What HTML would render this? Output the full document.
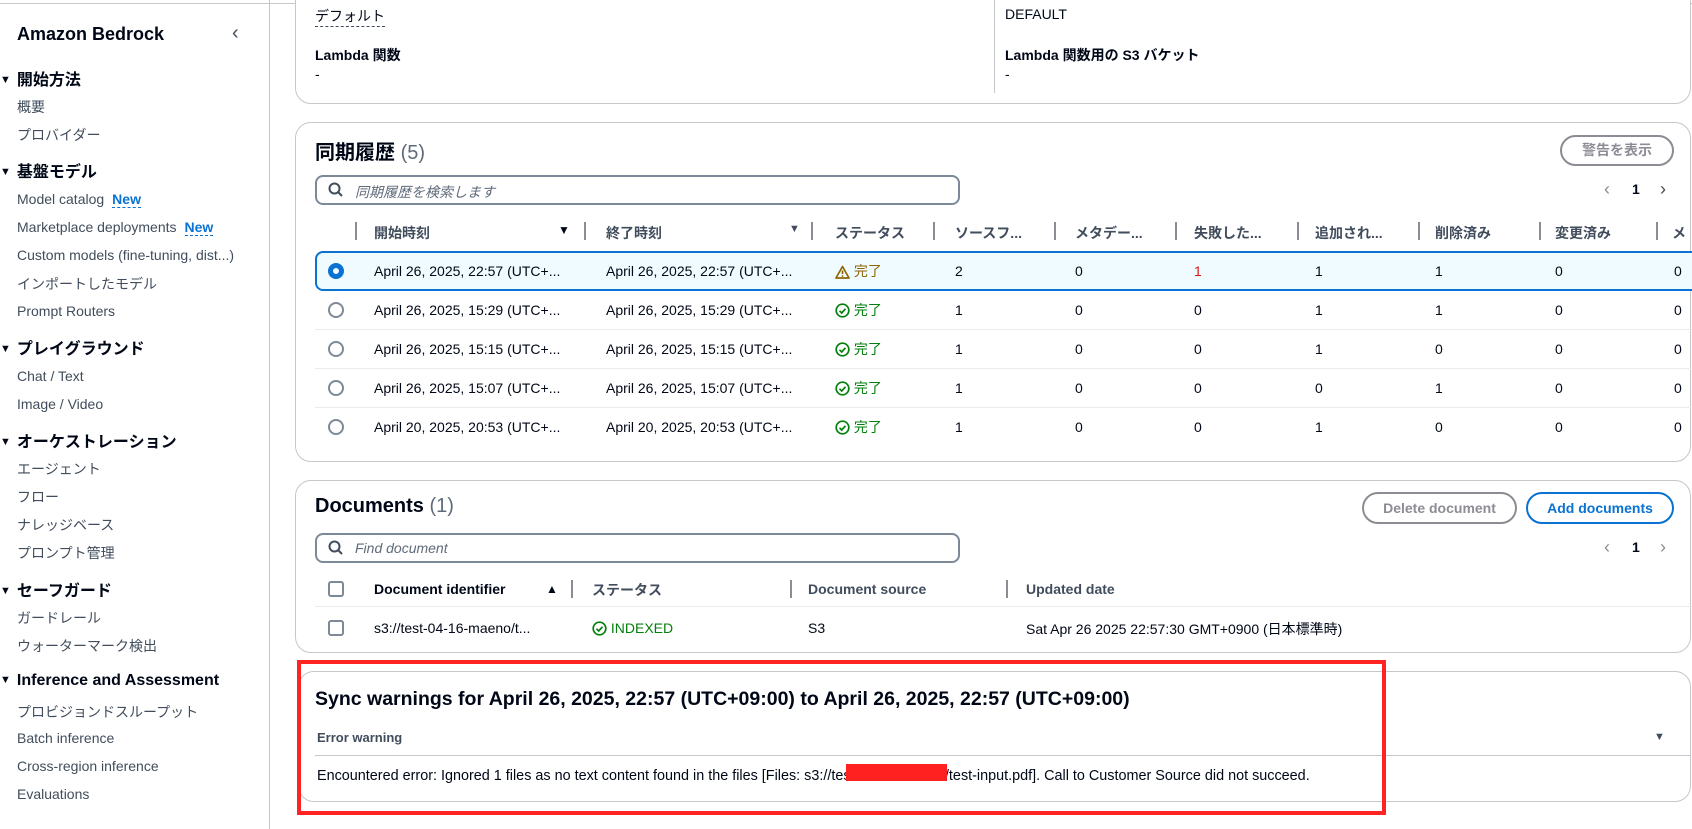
<!DOCTYPE html>
<html><head><meta charset="utf-8"><style>
*{box-sizing:border-box;margin:0;padding:0}
body{width:1692px;height:829px;overflow:hidden;background:#fff;font-family:"Liberation Sans","Noto Sans CJK JP",sans-serif;color:#000716;font-size:14px;position:relative}
.a{position:absolute;white-space:nowrap}
.nav{left:17px;font-size:14px;color:#414d5c}
.sec{left:0;font-size:16px;font-weight:bold;color:#000716}
.sec:before{content:"▼";font-size:11px;margin-right:6px;position:relative;top:-2px}
.new{color:#0972d3;font-weight:bold;border-bottom:1px dashed #0972d3;margin-left:8px}
.panel{position:absolute;border:1px solid #c6c6cd;border-radius:16px;background:#fff}
.h{font-size:14px;font-weight:bold;color:#414d5c}
.div{position:absolute;width:2px;height:18px;background:#8c8c94}
.row{position:absolute;left:315px;width:1377px;height:1px;background:#e9ebed}
.btn{position:absolute;border:2px solid #8c8c94;border-radius:20px;color:#8c8c94;font-weight:bold;font-size:14px;text-align:center}
.search{position:absolute;border:2px solid #7d8998;border-radius:8px;color:#5f6b7a;font-style:italic;font-size:14px}
.radio{position:absolute;width:16px;height:16px;border:2px solid #7d8998;border-radius:50%}
.g{color:#037f0c}
.st svg{vertical-align:-3px}
</style></head><body>
<div class="a" style="left:0;top:3px;width:1692px;height:1px;background:#c6c6cd"></div>
<div class="a" style="left:269px;top:0;width:1px;height:829px;background:#c6c6cd"></div>
<div class="a" style="left:17px;top:24px;font-size:18px;font-weight:bold">Amazon Bedrock</div>
<div class="a" style="left:232px;top:22px;font-size:20px;color:#414d5c">‹</div>
<div class="a sec" style="top:66px">開始方法</div>
<div class="a nav" style="top:97px">概要</div>
<div class="a nav" style="top:125px">プロバイダー</div>
<div class="a sec" style="top:158px">基盤モデル</div>
<div class="a nav" style="top:191px">Model catalog<span class="new">New</span></div>
<div class="a nav" style="top:219px">Marketplace deployments<span class="new">New</span></div>
<div class="a nav" style="top:247px">Custom models (fine-tuning, dist...)</div>
<div class="a nav" style="top:274px">インポートしたモデル</div>
<div class="a nav" style="top:303px">Prompt Routers</div>
<div class="a sec" style="top:335px">プレイグラウンド</div>
<div class="a nav" style="top:368px">Chat / Text</div>
<div class="a nav" style="top:396px">Image / Video</div>
<div class="a sec" style="top:428px">オーケストレーション</div>
<div class="a nav" style="top:459px">エージェント</div>
<div class="a nav" style="top:487px">フロー</div>
<div class="a nav" style="top:515px">ナレッジベース</div>
<div class="a nav" style="top:543px">プロンプト管理</div>
<div class="a sec" style="top:577px">セーフガード</div>
<div class="a nav" style="top:608px">ガードレール</div>
<div class="a nav" style="top:636px">ウォーターマーク検出</div>
<div class="a sec" style="top:672px">Inference and Assessment</div>
<div class="a nav" style="top:702px">プロビジョンドスループット</div>
<div class="a nav" style="top:730px">Batch inference</div>
<div class="a nav" style="top:758px">Cross-region inference</div>
<div class="a nav" style="top:786px">Evaluations</div>

<div class="panel" style="left:295px;top:-30px;width:1396px;height:134px"></div>
<div class="a" style="left:315px;top:6px;border-bottom:1px dashed #414d5c">デフォルト</div>
<div class="a" style="left:1005px;top:6px">DEFAULT</div>
<div class="a" style="left:994px;top:0;width:1px;height:93px;background:#c6c6cd"></div>
<div class="a" style="left:315px;top:45px;font-weight:bold">Lambda 関数</div>
<div class="a" style="left:315px;top:66px">-</div>
<div class="a" style="left:1005px;top:45px;font-weight:bold">Lambda 関数用の S3 バケット</div>
<div class="a" style="left:1005px;top:66px">-</div>

<div class="panel" style="left:295px;top:122px;width:1396px;height:340px"></div>
<div class="a" style="left:315px;top:136px;font-size:20px;font-weight:bold">同期履歴 <span style="font-weight:normal;color:#5f6b7a">(5)</span></div>
<div class="btn" style="left:1560px;top:135px;width:114px;height:31px;line-height:27px">警告を表示</div>
<div class="search" style="left:315px;top:175px;width:645px;height:30px;padding:5px 0 0 38px">同期履歴を検索します</div>
<svg class="a" style="left:328px;top:182px" width="16" height="16"><circle cx="6.5" cy="6.5" r="5" fill="none" stroke="#414d5c" stroke-width="2"/><line x1="10" y1="10" x2="14" y2="14" stroke="#414d5c" stroke-width="2"/></svg>
<div class="a" style="left:1604px;top:179px;color:#8c8c94;font-size:18px">‹</div>
<div class="a" style="left:1632px;top:181px;font-weight:bold">1</div>
<div class="a" style="left:1660px;top:179px;color:#414d5c;font-size:18px">›</div>
<div class="div" style="left:355px;top:222px"></div><div class="div" style="left:584px;top:222px"></div><div class="div" style="left:811px;top:222px"></div><div class="div" style="left:933px;top:222px"></div><div class="div" style="left:1054px;top:222px"></div><div class="div" style="left:1175px;top:222px"></div><div class="div" style="left:1297px;top:222px"></div><div class="div" style="left:1418px;top:222px"></div><div class="div" style="left:1539px;top:222px"></div><div class="div" style="left:1656px;top:222px"></div>
<div class="a h" style="left:374px;top:223px">開始時刻</div><div class="a" style="left:558px;top:223px;font-size:12px">▼</div>
<div class="a h" style="left:606px;top:223px">終了時刻</div><div class="a" style="left:789px;top:223px;font-size:11px;color:#414d5c">▼</div>
<div class="a h" style="left:835px;top:223px">ステータス</div>
<div class="a h" style="left:955px;top:223px">ソースフ...</div>
<div class="a h" style="left:1075px;top:223px">メタデー...</div>
<div class="a h" style="left:1194px;top:223px">失敗した...</div>
<div class="a h" style="left:1315px;top:223px">追加され...</div>
<div class="a h" style="left:1435px;top:223px">削除済み</div>
<div class="a h" style="left:1555px;top:223px">変更済み</div>
<div class="a h" style="left:1672px;top:223px">メ</div>
<div class="a" style="left:315px;top:251px;width:1390px;height:40px;background:#f0fbff;border:2px solid #0972d3;border-radius:8px"></div>
<div class="row" style="top:329px"></div><div class="row" style="top:368px"></div><div class="row" style="top:407px"></div>
<div class="radio" style="left:328px;top:263px;border:5px solid #0972d3"></div>
<div class="radio" style="left:328px;top:302px"></div><div class="radio" style="left:328px;top:341px"></div><div class="radio" style="left:328px;top:380px"></div><div class="radio" style="left:328px;top:419px"></div>

<div class="a" style="left:374px;top:263px">April 26, 2025, 22:57 (UTC+...</div><div class="a" style="left:606px;top:263px">April 26, 2025, 22:57 (UTC+...</div>
<div class="a st" style="left:835px;top:261px;color:#8d6605"><svg width="15" height="14"><path d="M7.5 1.5L14 13H1z" fill="none" stroke="#8d6605" stroke-width="1.7" stroke-linejoin="round"/><line x1="7.5" y1="5.5" x2="7.5" y2="9" stroke="#8d6605" stroke-width="1.7"/><circle cx="7.5" cy="11" r="0.9" fill="#8d6605"/></svg> 完了</div>
<div class="a" style="left:955px;top:263px">2</div><div class="a" style="left:1075px;top:263px">0</div><div class="a" style="left:1194px;top:263px;color:#d91515">1</div><div class="a" style="left:1315px;top:263px">1</div><div class="a" style="left:1435px;top:263px">1</div><div class="a" style="left:1555px;top:263px">0</div><div class="a" style="left:1674px;top:263px">0</div>

<div class="a" style="left:374px;top:302px">April 26, 2025, 15:29 (UTC+...</div><div class="a" style="left:606px;top:302px">April 26, 2025, 15:29 (UTC+...</div>
<div class="a g st" style="left:835px;top:300px"><svg width="15" height="15"><circle cx="7.5" cy="7.5" r="6.3" fill="none" stroke="#037f0c" stroke-width="1.7"/><path d="M4.5 7.8l2.2 2.2 3.8-4.2" fill="none" stroke="#037f0c" stroke-width="1.7"/></svg> 完了</div>
<div class="a" style="left:955px;top:302px">1</div><div class="a" style="left:1075px;top:302px">0</div><div class="a" style="left:1194px;top:302px">0</div><div class="a" style="left:1315px;top:302px">1</div><div class="a" style="left:1435px;top:302px">1</div><div class="a" style="left:1555px;top:302px">0</div><div class="a" style="left:1674px;top:302px">0</div>

<div class="a" style="left:374px;top:341px">April 26, 2025, 15:15 (UTC+...</div><div class="a" style="left:606px;top:341px">April 26, 2025, 15:15 (UTC+...</div>
<div class="a g st" style="left:835px;top:339px"><svg width="15" height="15"><circle cx="7.5" cy="7.5" r="6.3" fill="none" stroke="#037f0c" stroke-width="1.7"/><path d="M4.5 7.8l2.2 2.2 3.8-4.2" fill="none" stroke="#037f0c" stroke-width="1.7"/></svg> 完了</div>
<div class="a" style="left:955px;top:341px">1</div><div class="a" style="left:1075px;top:341px">0</div><div class="a" style="left:1194px;top:341px">0</div><div class="a" style="left:1315px;top:341px">1</div><div class="a" style="left:1435px;top:341px">0</div><div class="a" style="left:1555px;top:341px">0</div><div class="a" style="left:1674px;top:341px">0</div>

<div class="a" style="left:374px;top:380px">April 26, 2025, 15:07 (UTC+...</div><div class="a" style="left:606px;top:380px">April 26, 2025, 15:07 (UTC+...</div>
<div class="a g st" style="left:835px;top:378px"><svg width="15" height="15"><circle cx="7.5" cy="7.5" r="6.3" fill="none" stroke="#037f0c" stroke-width="1.7"/><path d="M4.5 7.8l2.2 2.2 3.8-4.2" fill="none" stroke="#037f0c" stroke-width="1.7"/></svg> 完了</div>
<div class="a" style="left:955px;top:380px">1</div><div class="a" style="left:1075px;top:380px">0</div><div class="a" style="left:1194px;top:380px">0</div><div class="a" style="left:1315px;top:380px">0</div><div class="a" style="left:1435px;top:380px">1</div><div class="a" style="left:1555px;top:380px">0</div><div class="a" style="left:1674px;top:380px">0</div>

<div class="a" style="left:374px;top:419px">April 20, 2025, 20:53 (UTC+...</div><div class="a" style="left:606px;top:419px">April 20, 2025, 20:53 (UTC+...</div>
<div class="a g st" style="left:835px;top:417px"><svg width="15" height="15"><circle cx="7.5" cy="7.5" r="6.3" fill="none" stroke="#037f0c" stroke-width="1.7"/><path d="M4.5 7.8l2.2 2.2 3.8-4.2" fill="none" stroke="#037f0c" stroke-width="1.7"/></svg> 完了</div>
<div class="a" style="left:955px;top:419px">1</div><div class="a" style="left:1075px;top:419px">0</div><div class="a" style="left:1194px;top:419px">0</div><div class="a" style="left:1315px;top:419px">1</div><div class="a" style="left:1435px;top:419px">0</div><div class="a" style="left:1555px;top:419px">0</div><div class="a" style="left:1674px;top:419px">0</div>

<div class="panel" style="left:295px;top:480px;width:1396px;height:173px"></div>
<div class="a" style="left:315px;top:495px;font-size:20px;font-weight:bold">Documents <span style="font-weight:normal;color:#5f6b7a">(1)</span></div>
<div class="btn" style="left:1362px;top:492px;width:155px;height:32px;line-height:28px">Delete document</div>
<div class="btn" style="left:1526px;top:492px;width:148px;height:32px;line-height:28px;border-color:#0972d3;color:#0972d3">Add documents</div>
<div class="search" style="left:315px;top:533px;width:645px;height:30px;padding:5px 0 0 38px">Find document</div>
<svg class="a" style="left:328px;top:540px" width="16" height="16"><circle cx="6.5" cy="6.5" r="5" fill="none" stroke="#414d5c" stroke-width="2"/><line x1="10" y1="10" x2="14" y2="14" stroke="#414d5c" stroke-width="2"/></svg>
<div class="a" style="left:1604px;top:537px;color:#8c8c94;font-size:18px">‹</div>
<div class="a" style="left:1632px;top:539px;font-weight:bold">1</div>
<div class="a" style="left:1660px;top:537px;color:#8c8c94;font-size:18px">›</div>
<div class="a" style="left:328px;top:581px;width:16px;height:16px;border:2px solid #7d8998;border-radius:3px"></div>
<div class="a h" style="left:374px;top:581px;color:#000716">Document identifier</div><div class="a" style="left:546px;top:582px;font-size:12px">▲</div>
<div class="div" style="left:571px;top:580px"></div><div class="div" style="left:790px;top:580px"></div><div class="div" style="left:1006px;top:580px"></div>
<div class="a h" style="left:592px;top:580px">ステータス</div>
<div class="a h" style="left:808px;top:581px">Document source</div>
<div class="a h" style="left:1026px;top:581px">Updated date</div>
<div class="row" style="top:606px"></div>
<div class="a" style="left:328px;top:620px;width:16px;height:16px;border:2px solid #7d8998;border-radius:3px"></div>
<div class="a" style="left:374px;top:620px">s3://test-04-16-maeno/t...</div>
<div class="a g st" style="left:592px;top:620px"><svg width="15" height="15"><circle cx="7.5" cy="7.5" r="6.3" fill="none" stroke="#037f0c" stroke-width="1.7"/><path d="M4.5 7.8l2.2 2.2 3.8-4.2" fill="none" stroke="#037f0c" stroke-width="1.7"/></svg> INDEXED</div>
<div class="a" style="left:808px;top:620px">S3</div>
<div class="a" style="left:1026px;top:619px">Sat Apr 26 2025 22:57:30 GMT+0900 (日本標準時)</div>

<div class="panel" style="left:298px;top:671px;width:1393px;height:131px"></div>
<div class="a" style="left:315px;top:688px;font-size:19.5px;font-weight:bold">Sync warnings for April 26, 2025, 22:57 (UTC+09:00) to April 26, 2025, 22:57 (UTC+09:00)</div>
<div class="a" style="left:317px;top:730px;font-size:13px;font-weight:bold;color:#414d5c">Error warning</div>
<div class="a" style="left:1654px;top:731px;font-size:11px;color:#414d5c">▼</div>
<div class="a" style="left:315px;top:755px;width:1376px;height:1px;background:#c6c6cd"></div>
<div class="a" style="left:317px;top:768px;font-size:14.4px">Encountered error: Ignored 1 files as no text content found in the files [Files: s3://test-04-16-maeno/test-input.pdf]. Call to Customer Source did not succeed.</div>
<div class="a" style="left:846px;top:764px;width:101px;height:17px;background:#ff2020"></div>
<div class="a" style="left:297px;top:660px;width:1089px;height:155px;border:4px solid #ff2424"></div>
</body></html>
